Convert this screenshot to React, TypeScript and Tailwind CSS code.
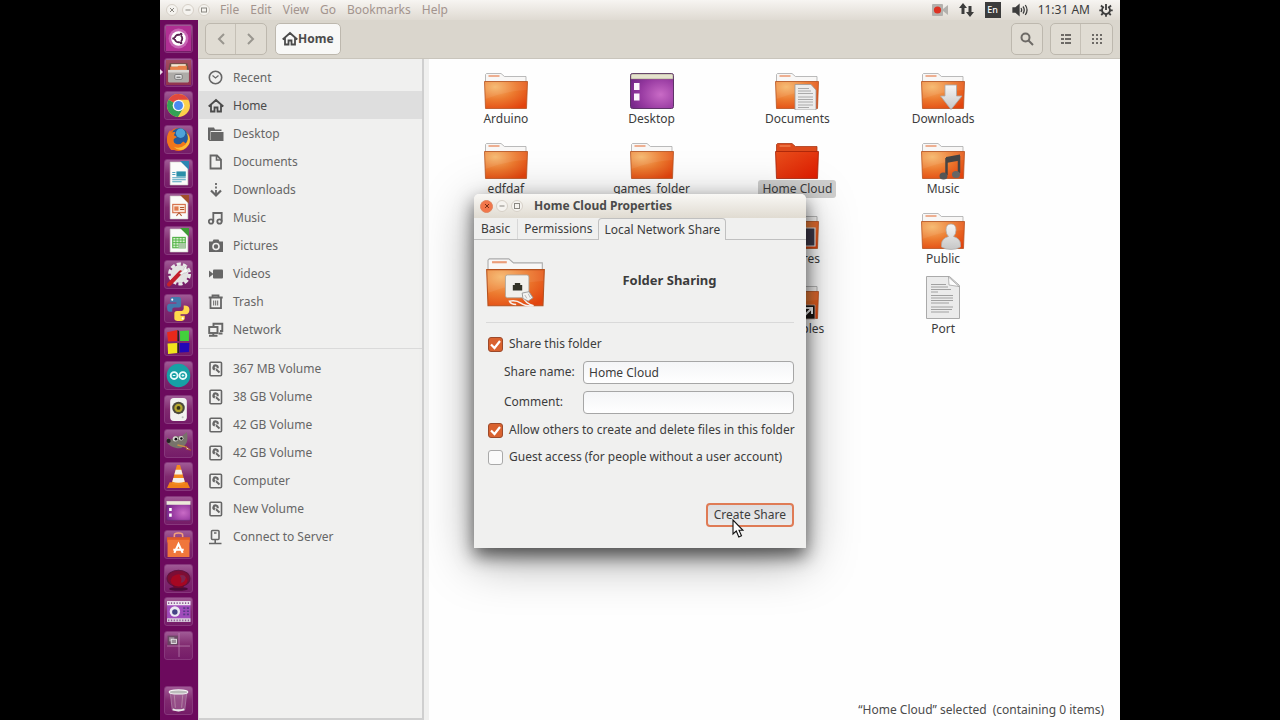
import { useState } from 'react'
import type { ReactNode } from 'react'

const FONT = "font-['Noto_Sans','Open_Sans',sans-serif]"

const MENUS = ['File', 'Edit', 'View', 'Go', 'Bookmarks', 'Help']

const PLACES = [
  { label: 'Recent', icon: 'recent' },
  { label: 'Home', icon: 'home' },
  { label: 'Desktop', icon: 'folder' },
  { label: 'Documents', icon: 'document' },
  { label: 'Downloads', icon: 'download' },
  { label: 'Music', icon: 'music' },
  { label: 'Pictures', icon: 'camera' },
  { label: 'Videos', icon: 'video' },
  { label: 'Trash', icon: 'trash' },
  { label: 'Network', icon: 'network' },
]

const DEVICES = [
  { label: '367 MB Volume', icon: 'disk' },
  { label: '38 GB Volume', icon: 'disk' },
  { label: '42 GB Volume', icon: 'disk' },
  { label: '42 GB Volume', icon: 'disk' },
  { label: 'Computer', icon: 'disk' },
  { label: 'New Volume', icon: 'disk' },
  { label: 'Connect to Server', icon: 'server' },
]

const FILES = [
  { name: 'Arduino', art: 'folder' },
  { name: 'Desktop', art: 'desktop' },
  { name: 'Documents', art: 'documents' },
  { name: 'Downloads', art: 'downloads' },
  { name: 'edfdaf', art: 'folder' },
  { name: 'games_folder', art: 'folder' },
  { name: 'Home Cloud', art: 'selected' },
  { name: 'Music', art: 'music' },
  { name: 'Pictures', art: 'pictures', col: 'col-start-3' },
  { name: 'Public', art: 'public' },
  { name: 'Examples', art: 'link', col: 'col-start-3' },
  { name: 'Port', art: 'text' },
]

export default function App() {
  return (
    <div className={`h-screen bg-black px-[12.5%] text-[12px] leading-4 text-[#3c3c3c] ${FONT}`}>
      <Gradients />
      <div className="relative flex h-full flex-col overflow-hidden bg-[#f0f0ef]">
        <TopPanel />
        <div className="flex min-h-0 flex-1">
          <Launcher />
          <div className="flex min-w-0 flex-1 flex-col">
            <Toolbar />
            <div className="flex min-h-0 flex-1">
              <Sidebar />
              <Files />
            </div>
          </div>
        </div>
        <PropertiesDialog />
      </div>
    </div>
  )
}

/* ---------- top panel ---------- */

function TopPanel() {
  return (
    <header className="flex h-5 shrink-0 items-center bg-linear-to-b from-[#f7f5f2] to-[#dfdad2] pr-[7px] pl-1.5">
      <div className="flex gap-1">
        <WindowButton label="Close window" kind="close" />
        <WindowButton label="Minimize window" kind="min" />
        <WindowButton label="Restore window" kind="max" />
      </div>
      <nav className="ml-2.5 flex gap-[11px] text-[#a3948e]">
        {MENUS.map((m) => (
          <button key={m}>{m}</button>
        ))}
      </nav>
      <div className="ml-auto flex items-center gap-[9px]">
        <svg width="16" height="14" viewBox="0 0 16 14" aria-label="Recording">
          <rect x="0" y="1" width="11" height="12" rx="1" fill="#b3b1ad" />
          <path d="M11 6l5-4v10l-5-4z" fill="#b3b1ad" />
          <circle cx="5.500" cy="7" r="3.600" fill="#dd3223" />
        </svg>
        <svg width="15" height="14" viewBox="0 0 15 14" fill="#3c3c3c" className="ml-0.5">
          <path d="M4 0l4 5H5.500v6h-3V5H0z" />
          <path d="M11 14l4-5h-2.500V3h-3v6H7z" />
        </svg>
        <span className="ml-0.5 flex h-4 w-4 items-center justify-center bg-[#3c3c3c] text-[9px] font-medium text-white">En</span>
        <svg width="17" height="14" viewBox="0 0 17 14" fill="none" stroke="#3c3c3c" strokeWidth="1.300" className="ml-0.5">
          <path d="M1 5h2.500L7 2v10L3.500 9H1z" fill="#3c3c3c" />
          <path d="M9 5q1.300 2 0 4M11 3.500q2.500 3.500 0 7M13.300 2q3.500 5 0 10" />
        </svg>
        <time>11:31 AM</time>
        <svg width="14" height="14" viewBox="0 0 14 14" fill="none" stroke="#3c3c3c">
          <path d="M4.800 3.700a4 4 0 1 0 4.400 0" strokeWidth="1.800" />
          <path d="M7 1v6" strokeWidth="1.800" />
          <path d="M12 2.500l-1.700 1.700M2 2.500l1.700 1.700M.3 7.300h2.500M11.200 7.300h2.500M2.200 12l1.700-1.700M11.800 12l-1.700-1.700M7 11v2.800" strokeWidth="1.800" />
        </svg>
      </div>
    </header>
  )
}

function WindowButton({ label, kind, active }: { label: string; kind: string; active?: boolean }) {
  return (
    <button
      aria-label={label}
      className={`flex items-center justify-center rounded-full border ${
        active ? 'h-[13px] w-[13px] border-[#e0845e] bg-[#f2764a] text-[#7a3014]' : 'h-3 w-3 border-[#d6d0c7] bg-[#f5f3ef] text-[#8a8781]'
      }`}
    >
      <svg width="8" height="8" viewBox="0 0 8 8" fill="none" stroke="currentColor" className="shrink-0">
        {kind === 'close' && <path d="M2 2l4 4M6 2L2 6" />}
        {kind === 'min' && <path d="M1.500 4h5" />}
        {kind === 'max' && <rect x="1.500" y="2" width="5" height="4" />}
        {kind === 'square' && <rect x="1.500" y="1.500" width="5" height="5" />}
      </svg>
    </button>
  )
}

/* ---------- launcher ---------- */

function Launcher() {
  return (
    <nav aria-label="Launcher" className="relative flex w-[38px] shrink-0 flex-col items-center bg-[#6c0a5d] pt-1 pr-px pb-[5px]">
      <ul className="flex flex-1 flex-col justify-between">
        {APPS.map((app) => (
          <li key={app.name}>
            <Tile name={app.name}>{app.art}</Tile>
          </li>
        ))}
      </ul>
      <div className="mt-[26px]">
        <Tile name="Trash">
          <path d="M4 4l2 17q6 2 12 0l2-17z" fill="#c9a5c4" fillOpacity=".3" stroke="#b690b0" strokeWidth=".6" />
          <ellipse cx="12" cy="3.800" rx="9" ry="2" fill="#bbb" stroke="#f6f6f6" />
          <path d="M6.500 20.500q5.500 2 11 0" stroke="#e8e8e8" strokeWidth="2" fill="none" />
          <path d="M8 7l1 12M16 7l-1 12" stroke="#dcc" strokeOpacity=".4" />
        </Tile>
      </div>
      {/* running marker for the file manager */}
      <span className="absolute top-[49px] left-0 border-y-3 border-l-3 border-y-transparent border-l-[#e6d6e4]" />
    </nav>
  )
}

function Tile({ name, children }: { name: string; children: ReactNode }) {
  return (
    <button
      aria-label={name}
      className="flex h-[29px] w-[29px] items-center justify-center rounded-[3px] border border-[#87377c] bg-linear-to-b from-[#a05a96] via-[#80296f] to-[#751c68]"
    >
      <svg width="25" height="25" viewBox="0 0 24 24" className="shrink-0">
        {children}
      </svg>
    </button>
  )
}

function Sheet({ color, children }: { color: string; children: ReactNode }) {
  return (
    <>
      <path d="M4 1h11l6 6v16H4z" fill="#fbfbf9" stroke="#cfd3c9" strokeWidth=".6" />
      <path d="M13.500 0H22v8.500z" fill={color} />
      {children}
    </>
  )
}

const APPS = [
  {
    name: 'Search',
    art: (
      <>
        <rect x="-1" y="-1" width="26" height="26" rx="2" fill="#b02f93" />
        <circle cx="12" cy="12" r="9.500" fill="#c765b3" />
        <circle cx="12" cy="12" r="7" fill="#fff" />
        <circle cx="12" cy="12" r="3.600" fill="none" stroke="#5a2250" strokeWidth="1.800" />
        <path d="M12 12L6.500 12M12 12l3-5M12 12l3 5" stroke="#fff" strokeWidth="1" />
        <circle cx="7.300" cy="12" r="1.300" fill="#5a2250" />
        <circle cx="14.400" cy="7.800" r="1.300" fill="#5a2250" />
        <circle cx="14.400" cy="16.200" r="1.300" fill="#5a2250" />
      </>
    ),
  },
  {
    name: 'Files',
    art: (
      <>
        <rect x="-1" y="-1" width="26" height="26" rx="2" fill="#a6463f" fillOpacity=".6" />
        <path d="M3.500 3h17l1.500 7H2z" fill="#6b5246" />
        <path d="M5 4h14v2.500H5z" fill="#f6e9d4" />
        <path d="M4 6.500h7l1-1h8v4.500H4z" fill="#e9824a" />
        <rect x="2" y="9.500" width="20" height="12" rx="1" fill="#adaba7" />
        <rect x="2" y="9.500" width="20" height="2.500" fill="#d9d8d4" />
        <rect x="8.500" y="14" width="7" height="4.500" rx="1" fill="#eee" stroke="#666" strokeWidth=".8" />
        <path d="M10 16.500h4" stroke="#555" />
      </>
    ),
  },
  {
    name: 'Chrome',
    art: (
      <>
        <circle cx="12" cy="12" r="11" fill="#fcd04b" />
        <path d="M12 12L2.500 6.400A11 11 0 0 1 21.600 6.500H12z" fill="#e2483c" />
        <path d="M2.500 6.400A11 11 0 0 0 11.500 23l5-8.500L12 12z" fill="#34a155" />
        <circle cx="12" cy="12" r="5.600" fill="#f5f5f5" />
        <circle cx="12" cy="12" r="4.300" fill="#4a8af0" />
      </>
    ),
  },
  {
    name: 'Firefox',
    art: (
      <>
        <circle cx="12" cy="12" r="11" fill="#ee6c17" />
        <circle cx="13" cy="9.500" r="8.500" fill="#255a9c" />
        <circle cx="14" cy="6" r="4.500" fill="#4fa3d8" />
        <path d="M1 12C1 8 2 5 4 3l1 2.500q2-1 4-.5L7.500 8l3 1.500-3 2q-1 4 3 5 4 .5 6-2.500l3 2-3 6H5Q1 18 1 12z" fill="#f0761c" />
        <path d="M19.500 5q3.500 7-1 12-5 4.500-11 2 4 4.500 9 2.500 6.500-3 6.500-9.500Q22.500 8 19.500 5z" fill="#fbbd37" />
      </>
    ),
  },
  {
    name: 'Writer',
    art: (
      <Sheet color="#2a86b3">
        <rect x="10" y="10" width="9" height="5" fill="#2b8fa8" />
        <path d="M6 11h3M6 13h3M6 16h13M6 18h13M6 20h9" stroke="#4fa3bf" />
      </Sheet>
    ),
  },
  {
    name: 'Impress',
    art: (
      <Sheet color="#a34f2c">
        <rect x="6.500" y="9" width="12" height="8" fill="#fbe6d8" stroke="#d2673e" />
        <rect x="8" y="11" width="4" height="4" fill="#e07c4f" />
        <path d="M13.500 12h4M13.500 14h4M10 20l2.500-3 2.500 3" stroke="#b1582f" fill="none" />
      </Sheet>
    ),
  },
  {
    name: 'Calc',
    art: (
      <Sheet color="#3d9b35">
        <rect x="6.500" y="9" width="12" height="10" fill="#d5f0cb" stroke="#4aae3d" />
        <path d="M6.500 11.500h12M6.500 14h12M6.500 16.500h12M9.500 9v10M12.500 9v10M15.500 9v10" stroke="#4aae3d" strokeWidth=".8" />
        <path d="M12 14.500h7v5h-7z" fill="#a9c9a4" />
      </Sheet>
    ),
  },
  {
    name: 'System Settings',
    art: (
      <>
        <circle cx="13" cy="11.500" r="9.500" fill="none" stroke="#e8e8e8" strokeWidth="3" strokeDasharray="4 1.968" />
        <circle cx="13" cy="11.500" r="8.500" fill="#e3e3e1" />
        <path d="M3 21.500L14 10" stroke="#c4202a" strokeWidth="4" strokeLinecap="round" />
        <path d="M13 11l4-3.500q0-3 3-4l-.5 3 2 1q-1 3.500-4.500 3l-2 2z" fill="#f5f5f5" stroke="#aaa" strokeWidth=".4" />
      </>
    ),
  },
  {
    name: 'Python',
    art: (
      <>
        <path d="M6 1h6q2.500 0 2.500 2.500V9q0 2-2 2H8q-2 0-2 2v2H3.500Q1 15 1 11q0-3.500 2.500-3.500H10V6H4V3q0-2 2-2z" fill="#4279ad" />
        <path d="M14 9h3.500Q22.500 9 22.500 13q0 4-3 4.500H14v1.500h4v2.500Q17.500 24 13 24q-5 0-5-2.500V17q0-2.500 2.500-2.500H15q2-.5 2-2.500V9z" fill="#ffd84b" />
        <circle cx="6" cy="3.500" r="1" fill="#fff" />
        <circle cx="16" cy="21.500" r="1" fill="#fff" />
      </>
    ),
  },
  {
    name: 'Blocks',
    art: (
      <>
        <path d="M1 3l10-2v10.500L2 12z" fill="#e8281b" />
        <path d="M13.500 2l8.500-.5v10h-8.500z" fill="#42d03c" />
        <path d="M1.500 14l9.500-.5V23l-9 1z" fill="#f0e31d" />
        <path d="M13 13.500h9.500L22 22l-9 .5z" fill="#2207b8" />
        <path d="M11 1l1.500 1v9.500H11zM11 13.500h1.500V23L11 23z" fill="#222" />
      </>
    ),
  },
  {
    name: 'Arduino IDE',
    art: (
      <>
        <circle cx="12" cy="12" r="11.300" fill="#16a0a5" />
        <circle cx="7.800" cy="12" r="3.300" fill="none" stroke="#e9fbfb" strokeWidth="1.800" />
        <circle cx="16.200" cy="12" r="3.300" fill="none" stroke="#e9fbfb" strokeWidth="1.800" />
        <path d="M6.500 12h2.500M15 12h2.500M16.200 10.800v2.400" stroke="#e9fbfb" />
      </>
    ),
  },
  {
    name: 'Webcam',
    art: (
      <>
        <rect x="4" y="1" width="16" height="22" rx="3.500" fill="#f2f2f0" />
        <circle cx="12" cy="10.500" r="6" fill="#4c4a3d" />
        <circle cx="12" cy="10.500" r="4" fill="#b3a52e" />
        <circle cx="12" cy="10.500" r="1.800" fill="#343217" />
        <circle cx="16" cy="19.500" r="1" fill="#bbb" />
      </>
    ),
  },
  {
    name: 'GIMP',
    art: (
      <>
        <path d="M1 6q2 3 5 2 1-4 5-3l5-.5 4-3.500q2 9-2 13-4 4-9 2-5-1-8-5z" fill="#77736a" />
        <circle cx="9" cy="7.500" r="2.500" fill="#d8d6d2" />
        <circle cx="14.500" cy="7" r="2.200" fill="#d8d6d2" />
        <circle cx="9.500" cy="7.800" r="1.300" fill="#111" />
        <circle cx="14.800" cy="7.200" r="1.200" fill="#111" />
        <circle cx="2.500" cy="9.500" r="2" fill="#222" />
        <path d="M11 13.500l9 2" stroke="#c98f45" strokeWidth="1.400" />
        <path d="M19 14.500l5 4-4.500-1z" fill="#d8d0cc" stroke="#a42" strokeWidth=".8" />
      </>
    ),
  },
  {
    name: 'VLC',
    art: (
      <>
        <path d="M3.500 17.500h17L23 23H1z" fill="#f08019" />
        <path d="M10.500 1h3l5 18q-6.500 2.500-13 0z" fill="#f48a1f" />
        <path d="M9.300 5.500h5.400l1.200 4.500H8zM7 13.500h10l1 3.500q-6 2-12 0z" fill="#f3f0ea" />
      </>
    ),
  },
  {
    name: 'Desktop',
    art: (
      <>
        <rect x=".5" y="3.500" width="23" height="18" rx="1" fill="url(#desk)" stroke="#5c2a66" strokeWidth=".5" />
        <rect x=".5" y="3" width="23" height="3.500" fill="#ece9da" />
        <path d="M3 9.500h2.500v3H3zM3 15h2.500v3H3z" fill="#fff" />
      </>
    ),
  },
  {
    name: 'Software',
    art: (
      <>
        <path d="M8 5V3q0-2 4-2t4 2v2" stroke="#f5a27b" strokeWidth="1.500" fill="none" />
        <path d="M1 5h22v5H1z" fill="#e05a27" />
        <path d="M1.500 7.500h21V24h-21z" fill="#f0763b" />
        <path d="M8 20l4-8.500 4 8.500M7 17h10" stroke="#fff" strokeWidth="2" fill="none" />
      </>
    ),
  },
  {
    name: 'Red Orb',
    art: (
      <>
        <ellipse cx="12" cy="22" rx="9" ry="1.800" fill="#4a0a37" />
        <ellipse cx="12" cy="12" rx="11" ry="8" fill="#7c0d35" stroke="#5d1540" />
        <ellipse cx="12.500" cy="14" rx="8" ry="6" fill="#a50722" />
        <path d="M13 9q5-1 6 2-1 5-5 5 2-4-1-7z" fill="#7d2450" />
        <path d="M6 18q6 4 12 0l-2 3H8z" fill="#6a0a2c" />
      </>
    ),
  },
  {
    name: 'Screen Recorder',
    art: (
      <>
        <rect x="1" y="2" width="22.500" height="20" fill="#a04cbb" />
        <rect x="1" y="2" width="22.500" height="4" fill="#eee8ef" />
        <rect x="1" y="18.500" width="22.500" height="3.500" fill="#d8d0da" />
        <path d="M2 4h21M2 20.500h21" stroke="#8b5b94" strokeWidth="1.600" strokeDasharray="1.200 1.500" />
        <path d="M17.500 8v9M21 8v9" stroke="#5b3a8a" strokeWidth="2" strokeDasharray="1.500 1.500" />
        <circle cx="8.500" cy="12" r="5" fill="#ece9f3" />
        <circle cx="8.500" cy="12.500" r="2.600" fill="#454384" />
      </>
    ),
  },
  {
    name: 'Workspaces',
    art: (
      <>
        <path d="M12.500 0v23M1 12.500h22" stroke="#c79bc1" strokeWidth=".6" />
        <rect x="1.500" y="2.500" width="10" height="9" fill="#5b4a58" fillOpacity=".7" />
        <rect x="3" y="4" width="5" height="4" fill="#9a8f98" />
        <rect x="5" y="6" width="5" height="4" fill="#9a8f98" stroke="#eee" strokeWidth=".8" />
      </>
    ),
  },
]

/* ---------- file manager ---------- */

function Toolbar() {
  return (
    <div className="flex h-[39px] shrink-0 items-center border-b border-[#c9c5bc] bg-[#dad6cd] px-[7px] text-[#6d6a66]">
      <div className="flex h-8 overflow-hidden rounded-[5px] border border-[#bdb8ae] bg-[#e0dcd3]">
        <button aria-label="Back" className="flex w-[30px] items-center justify-center border-r border-[#c5c0b6] text-[#99968f]">
          <svg width="8" height="12" viewBox="0 0 8 12" fill="none" stroke="currentColor" strokeWidth="2"><path d="M7 1L2 6l5 5" /></svg>
        </button>
        <button aria-label="Forward" className="flex w-[30px] items-center justify-center text-[#99968f]">
          <svg width="8" height="12" viewBox="0 0 8 12" fill="none" stroke="currentColor" strokeWidth="2"><path d="M1 1l5 5-5 5" /></svg>
        </button>
      </div>
      <button className="ml-2 flex h-8 items-center rounded-[5px] border border-[#bdb8ae] bg-[#f8f8f7] px-1.5 font-bold text-[#4b4b4b]">
        <SmallIcon name="home" />
        Home
      </button>
      <button aria-label="Search" className="ml-auto flex h-8 w-8 items-center justify-center rounded-[5px] border border-[#bdb8ae] bg-[#e0dcd3]">
        <svg width="14" height="14" viewBox="0 0 14 14" fill="none" stroke="currentColor" strokeWidth="2"><circle cx="5.500" cy="5.500" r="4" /><path d="M8.500 8.500l4.500 4.500" /></svg>
      </button>
      <div className="ml-[7px] flex h-8 overflow-hidden rounded-[5px] border border-[#bdb8ae] bg-[#e0dcd3]">
        <button aria-label="List view" className="flex w-[30px] items-center justify-center border-r border-[#c5c0b6]">
          <svg width="12" height="12" viewBox="0 0 12 12" fill="currentColor">
            <path d="M1 1h3v2H1zM1 5h3v2H1zM1 9h3v2H1zM5 1h6v2H5zM5 5h6v2H5zM5 9h6v2H5z" />
          </svg>
        </button>
        <button aria-label="Icon view" className="flex w-[31px] items-center justify-center">
          <svg width="12" height="12" viewBox="0 0 12 12" stroke="currentColor" strokeWidth="2" strokeDasharray="2 2">
            <path d="M1 2h10M1 6h10M1 10h10" />
          </svg>
        </button>
      </div>
    </div>
  )
}

function Sidebar() {
  return (
    <aside className="flex w-[226px] shrink-0 flex-col border-r-2 border-b-2 border-[#cfcfcf] border-l border-l-[#dcd4da] pt-1 text-[#666]">
      <PlaceList items={PLACES} current="Home" />
      <hr className="my-[5px] border-[#dadada]" />
      <PlaceList items={DEVICES} />
    </aside>
  )
}

function PlaceList({ items, current }: { items: { label: string; icon: string }[]; current?: string }) {
  return (
    <ul>
      {items.map((it, i) => (
        <li key={i}>
          <a
            href="#"
            className={`flex h-7 items-center gap-[9px] pt-px pl-[9px] ${it.label === current ? 'bg-[#dedede] text-[#4b4b4b]' : ''}`}
          >
            <SmallIcon name={it.icon} />
            {it.label}
          </a>
        </li>
      ))}
    </ul>
  )
}

function SmallIcon({ name }: { name: string }) {
  return (
    <svg width="16" height="16" viewBox="0 0 16 16" fill="none" stroke="currentColor" strokeWidth="1.600" className="shrink-0">
      {name === 'recent' && (
        <>
          <circle cx="7.500" cy="7.500" r="6.200" />
          <path d="M4.500 5.500L7.500 8l3-2.500" strokeWidth="1.200" />
        </>
      )}
      {name === 'home' && <path d="M.7 8.500L8 2l7.300 6.500M3 7v6.500h3.500V9.500h3v4H13V7" strokeWidth="1.800" />}
      {name === 'folder' && (
        <>
          <path d="M0 1.500h6l1 2h6.500V5H2.500v9H0z" fill="currentColor" stroke="none" />
          <path d="M3 6h12.500v9H3z" fill="currentColor" stroke="none" />
          <path d="M1.500 2v12.500H4" strokeWidth="1.200" />
        </>
      )}
      {name === 'document' && (
        <>
          <path d="M2.500 1.500h6.500l4 4v9H2.500z" strokeWidth="1.800" />
          <path d="M8.500 1.500V6H13" />
        </>
      )}
      {name === 'download' && (
        <>
          <path d="M8 1v2M8 4.500v2M8 8v4" strokeWidth="1.800" />
          <path d="M3 8.500l5 5 5-5" strokeWidth="2.200" />
        </>
      )}
      {name === 'music' && (
        <>
          <circle cx="3" cy="11.500" r="2.200" strokeWidth="1.800" />
          <circle cx="11.500" cy="11.500" r="2.200" strokeWidth="1.800" />
          <path d="M5.300 12V3h8.400v8.500" strokeWidth="1.800" />
        </>
      )}
      {name === 'camera' && (
        <>
          <path d="M1 3.500h3.500l1-2h5l1 2H15V14H1z" fill="currentColor" stroke="none" />
          <circle cx="8" cy="8.500" r="3" stroke="#f0efee" />
        </>
      )}
      {name === 'video' && (
        <>
          <rect x="5" y="3.500" width="10" height="9" rx="1" fill="currentColor" stroke="none" />
          <path d="M1 4.500L5.500 8 1 11.500z" fill="currentColor" stroke="none" />
        </>
      )}
      {name === 'trash' && (
        <>
          <path d="M.7 3.500h14M4.500 3V1.300h6V3M2.500 4v10.200h10.500V4" strokeWidth="1.800" />
          <path d="M5.700 6.500v5M7.700 6.500v5M9.700 6.500v5" strokeWidth="1" />
        </>
      )}
      {name === 'network' && (
        <>
          <rect x="1.200" y="5" width="8.300" height="6" strokeWidth="1.900" />
          <path d="M5.500 4V1.800h8.800V9H12M1 13.800h8.500M5.300 11.500V14M10.500 11.500h4" strokeWidth="1.900" />
        </>
      )}
      {name === 'disk' && (
        <>
          <rect x="2" y="1.200" width="11.500" height="13.500" rx="1" />
          <path d="M6.500 9.600A3.200 3.200 0 1 1 10.700 7.200H8.500L7 8z" fill="currentColor" stroke="none" />
          <circle cx="7.700" cy="6.500" r="1" fill="#f0f0ef" stroke="none" />
          <path d="M8 8.300l3.500 3.200" strokeWidth="1.900" />
        </>
      )}
      {name === 'server' && (
        <>
          <rect x="3.500" y="1.500" width="7.500" height="9" rx="1" />
          <path d="M7.200 11v3M1 14.500h12.500M6 4h2.500" />
        </>
      )}
    </svg>
  )
}

function Files() {
  return (
    <main className="ml-[5px] flex min-w-0 flex-1 flex-col bg-[#fefefe]">
      <ul className="grid grid-cols-4 gap-y-2 pt-[7px] pr-[104px] pl-1">
        {FILES.map((f) => (
          <li key={f.name} className={`flex h-[62px] flex-col items-center justify-end ${f.col ?? ''}`}>
            <FileArt art={f.art} />
            <span className={`h-[18px] rounded-[3px] px-1 leading-[18px] ${f.art === 'selected' ? 'bg-[#cfcfce]' : ''}`}>{f.name}</span>
          </li>
        ))}
      </ul>
      <footer className="mt-auto flex justify-end gap-1.5 pr-4 pb-0.5 text-[#4b4b4b]">
        <span>“Home Cloud” selected</span>
        <span>(containing 0 items)</span>
      </footer>
    </main>
  )
}

function FileArt({ art }: { art: string }) {
  if (art === 'text') {
    return (
      <svg width="34" height="44" viewBox="0 0 34 44" className="shrink-0">
        <path d="M.5 .5h23L33.500 9.500V42.500H.5z" fill="#ebebeb" stroke="#aaa" />
        <path d="M22.500 1L33 10.500l-10-1.500z" fill="#fdfdfd" stroke="#999" strokeWidth=".7" />
        <path d="M5 8.500h15M5 11h17M5 13.500h20M5 16h7M5 19.500h22M5 22h22M5 24.500h22M5 27h18M5 31h22M5 33.500h21M5 36h18" stroke="#999" strokeWidth=".9" />
      </svg>
    )
  }
  if (art === 'desktop') {
    return (
      <svg width="44" height="37" viewBox="0 0 44 37" className="shrink-0">
        <rect x=".5" y=".5" width="43" height="35" rx="2" fill="url(#desk)" stroke="#5e3468" />
        <path d="M1 2.500Q1 1 2.500 1h39q1.500 0 1.500 1.500V6H1z" fill="#e5e2cd" stroke="#8b8673" strokeWidth=".5" />
        <path d="M4 10h5.500v7H4zM4 20.500h5.500v7H4z" fill="#fbf5fb" />
      </svg>
    )
  }
  return (
    <svg width="44" height="37" viewBox="0 0 44 37" className="shrink-0">
      <FolderShape red={art === 'selected'} />
      {art === 'documents' && (
        <>
          <path d="M20 11.500h16l5 5.500v20H20z" fill="#ececec" stroke="#999" strokeWidth=".8" />
          <path d="M23 15.500h11M23 18h13M23 20.500h15M23 24h15M23 26.500h15M23 29h15M23 32h15M23 34.500h11" stroke="#999" strokeWidth=".8" />
        </>
      )}
      {art === 'downloads' && <path d="M24 12h11.500v11H41L30 36.500 19.500 23H24z" fill="url(#silver)" stroke="#a8a8a8" strokeWidth=".8" />}
      {art === 'music' && (
        <>
          <path d="M25 14l14-2.500v6L25 20z" fill="#444" />
          <path d="M25.500 15v17M38 13v17" stroke="#444" strokeWidth="2.500" />
          <ellipse cx="22.500" cy="33" rx="4" ry="3.500" fill="#555" />
          <ellipse cx="35" cy="31.500" rx="4" ry="3.500" fill="#666" />
        </>
      )}
      {art === 'public' && (
        <path d="M30 11q5 0 5 6 0 4-2.500 6.500 7 2 7 8V34q-4 2.500-9.500 2.500T20.500 34v-2.500q0-6 7-8Q25 21 25 17q0-6 5-6z" fill="url(#silver)" stroke="#aaa" strokeWidth=".7" />
      )}
      {art === 'pictures' && <path d="M14 15h26v18H14z" fill="#403b4c" stroke="#e8e8e8" strokeWidth="1.200" />}
      {art === 'link' && (
        <>
          <path d="M26 22h14v14H26z" fill="#1c1512" stroke="#c9b4a8" strokeWidth=".8" />
          <path d="M29 33l7-7M31 25h6v6" stroke="#fff" strokeWidth="2" fill="none" />
        </>
      )}
    </svg>
  )
}

function FolderShape({ red }: { red?: boolean }) {
  return (
    <>
      <path
        d="M1.500 9V1.500L2.500.5H17l3.500 3H42V9z"
        fill={red ? '#dd4a1c' : '#f8f7f6'}
        stroke={red ? '#a93a17' : '#aaa'}
        strokeWidth=".8"
      />
      <path d="M4.500 3h11" stroke={red ? '#ef7a4a' : '#eb9d78'} strokeWidth="1.600" />
      <path
        d="M.5 8.500h43L42.500 35.500h-41z"
        fill={red ? 'url(#folderRed)' : 'url(#folder)'}
        stroke={red ? '#a32108' : '#b5521f'}
        strokeWidth=".8"
      />
      {!red && <path d="M1 9h42l-.3 8Q22 18 1.500 26z" fill="#fff" fillOpacity=".07" />}
    </>
  )
}

/* gradients shared by the folder and launcher drawings */
function Gradients() {
  return (
    <svg className="absolute h-0 w-0" aria-hidden="true">
      <defs>
        <radialGradient id="folder" cx=".25" cy=".2" r=".95">
          <stop offset="0" stopColor="#f6b76c" />
          <stop offset=".5" stopColor="#ec7a2f" />
          <stop offset="1" stopColor="#e2440e" />
        </radialGradient>
        <linearGradient id="folderRed" x1="0" y1="0" x2="1" y2="1">
          <stop offset="0" stopColor="#e8501c" />
          <stop offset="1" stopColor="#dd1a00" />
        </linearGradient>
        <radialGradient id="desk" cx=".7" cy=".6" r=".8">
          <stop offset="0" stopColor="#c96bc6" />
          <stop offset=".6" stopColor="#9639a0" />
          <stop offset="1" stopColor="#6f2484" />
        </radialGradient>
        <linearGradient id="silver" x1="0" y1="0" x2="0" y2="1">
          <stop offset="0" stopColor="#f6f6f6" />
          <stop offset="1" stopColor="#c6c6c6" />
        </linearGradient>
      </defs>
    </svg>
  )
}

/* ---------- properties dialog ---------- */

function PropertiesDialog() {
  const [shared, setShared] = useState(true)
  const [writable, setWritable] = useState(true)
  const [guest, setGuest] = useState(false)
  const [shareName, setShareName] = useState('Home Cloud')
  const [comment, setComment] = useState('')

  return (
    <div
      role="dialog"
      aria-labelledby="dialog-title"
      className="absolute top-[194px] left-[314px] w-[332px] rounded-t-[5px] bg-[#f0f0ef] shadow-[0_12px_50px_rgba(0,0,0,0.35),0_8px_18px_rgba(0,0,0,0.6)]"
    >
      <div className="flex h-6 items-center gap-[3px] rounded-t-[5px] bg-linear-to-b from-[#f9f8f5] to-[#e0dbd1] pl-1.5">
        <WindowButton label="Close" kind="close" active />
        <WindowButton label="Minimize" kind="min" />
        <WindowButton label="Maximize" kind="square" />
        <h1 id="dialog-title" className="ml-2 font-bold text-[#4b4b4b]">
          Home Cloud Properties
        </h1>
      </div>

      <div role="tablist" className="flex h-[22px] items-end border-b border-[#c0c0c0]">
        <button role="tab" className="h-5 border-r border-[#d8d8d8] px-[7px]">Basic</button>
        <button role="tab" className="h-5 px-1.5">Permissions</button>
        <button role="tab" aria-selected="true" className="-mb-px h-[22px] rounded-t-[4px] border border-b-0 border-[#c0c0c0] bg-[#f0f0ef] px-[5px]">
          Local Network Share
        </button>
      </div>

      <form className="px-3 pb-[21px]" onSubmit={(e) => e.preventDefault()}>
        <div className="flex items-start border-b border-[#d9d9d9] pt-[18px] pb-[14px]">
          <svg width="59" height="50" viewBox="0 0 44 37" className="shrink-0">
            <FolderShape />
            <rect x="14.500" y="12.500" width="17.500" height="17" rx="1.500" fill="#f1f0ec" stroke="#a8a29a" strokeWidth=".6" />
            <path d="M20 24v-4h1.500v-1.500h4V20H27v4z" fill="#333328" />
            <path d="M27.500 29q2 5 8 6.500-6 .5-9.500-2t-8.500-1.500q1 2.500 5 2.500" fill="none" stroke="#f4f1ee" strokeWidth="1.100" />
            <path d="M27 26l5-1 3 4.500-3.500 2.500-4-2z" fill="#f3f3f1" stroke="#999" strokeWidth=".7" />
            <path d="M29 27.500l1.500 2.500M31.500 26.500l1.500 3" stroke="#aaa" strokeWidth=".6" />
          </svg>
          <h2 className="flex-1 pt-3.5 text-center text-[13px] font-bold">Folder Sharing</h2>
        </div>

        <div className="mt-[9px]">
          <Check label="Share this folder" checked={shared} onChange={setShared} />
        </div>
        <div className="mt-1 ml-[18px] flex h-6 items-center">
          <label htmlFor="share-name" className="w-[79px]">Share name:</label>
          <TextBox id="share-name" value={shareName} onChange={setShareName} />
        </div>
        <div className="mt-1.5 ml-[18px] flex h-6 items-center">
          <label htmlFor="comment" className="w-[79px]">Comment:</label>
          <TextBox id="comment" value={comment} onChange={setComment} />
        </div>
        <div className="mt-1 flex flex-col gap-[3px]">
          <Check label="Allow others to create and delete files in this folder" checked={writable} onChange={setWritable} />
          <Check label="Guest access (for people without a user account)" checked={guest} onChange={setGuest} />
        </div>

        <div className="relative mt-[34px] flex justify-end">
          <button type="submit" className="h-6 rounded-[4px] border-2 border-[#df7b55] bg-linear-to-b from-[#dddddf] to-[#ececec] px-1.5 leading-5">
            Create Share
          </button>
          {/* mouse pointer */}
          <svg width="12" height="19" viewBox="0 0 12 19" className="absolute top-4 right-[50px]">
            <path d="M1 1v14l3.300-3 2.500 6 2.700-1.200-2.500-5.500H11z" fill="#fff" stroke="#111" strokeWidth="1.100" />
          </svg>
        </div>
      </form>
    </div>
  )
}

function Check({ label, checked, onChange }: { label: string; checked: boolean; onChange: (v: boolean) => void }) {
  return (
    <label className="flex h-6 items-center gap-1.5 pl-0.5 whitespace-nowrap">
      <span className="grid shrink-0">
        <input
          type="checkbox"
          checked={checked}
          onChange={(e) => onChange(e.target.checked)}
          className="col-start-1 row-start-1 h-[15px] w-[15px] appearance-none rounded-[3px] border border-[#a9a9a9] bg-[#fafafa] checked:border-[#9c4a2b] checked:bg-[#d9622f]"
        />
        {checked && (
          <svg width="15" height="15" viewBox="0 0 15 15" className="pointer-events-none col-start-1 row-start-1">
            <path d="M3 7.500l3.500 3.500L12 4" fill="none" stroke="#fff" strokeWidth="2.200" />
          </svg>
        )}
      </span>
      {label}
    </label>
  )
}

function TextBox({ id, value, onChange }: { id: string; value: string; onChange: (v: string) => void }) {
  return (
    <input
      id={id}
      value={value}
      onChange={(e) => onChange(e.target.value)}
      className="h-[23px] min-w-0 flex-1 rounded-[4px] border border-[#a6a6a6] bg-linear-to-b from-[#f4f5f7] to-white px-[5px] outline-none"
    />
  )
}
